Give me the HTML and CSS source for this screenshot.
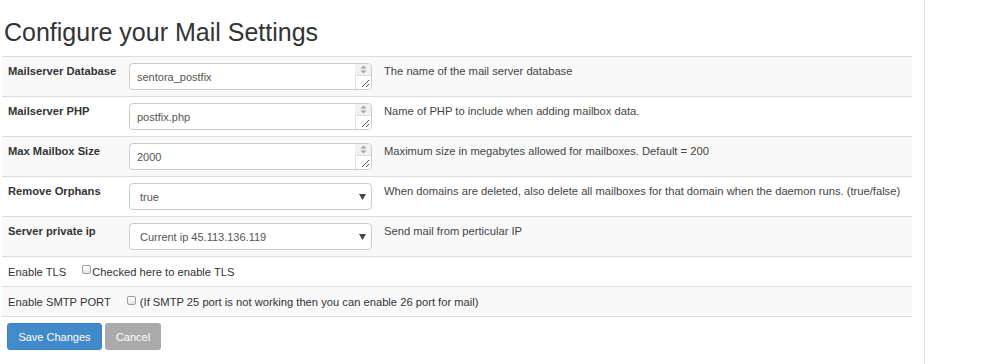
FILE: index.html
```html
<!DOCTYPE html>
<html>
<head>
<meta charset="utf-8">
<link rel="stylesheet" href="styles.css">
</head>
<body>
<div class="page">
  <h1 class="title">Configure your Mail Settings</h1>
  <div class="settings">
    <div class="row odd">
      <div class="label">Mailserver Database</div>
      <div class="field">
        <div class="textbox">
          <span class="value">sentora_postfix</span>
          <span class="scroll"><span class="arrows"><svg width="7" height="9" viewBox="0 0 7 9"><path d="M0.5 3.5 L3.5 0.5 L6.5 3.5 Z M0.5 5.5 L3.5 8.5 L6.5 5.5 Z" fill="#a3a3a3"/></svg></span><span class="grip"><svg width="9" height="9" viewBox="0 0 9 9"><path d="M8 1 L1 8 M8 5 L5 8" stroke="#555" stroke-width="1"/></svg></span></span>
        </div>
      </div>
      <div class="desc">The name of the mail server database</div>
    </div>
    <div class="row">
      <div class="label">Mailserver PHP</div>
      <div class="field">
        <div class="textbox">
          <span class="value">postfix.php</span>
          <span class="scroll"><span class="arrows"><svg width="7" height="9" viewBox="0 0 7 9"><path d="M0.5 3.5 L3.5 0.5 L6.5 3.5 Z M0.5 5.5 L3.5 8.5 L6.5 5.5 Z" fill="#a3a3a3"/></svg></span><span class="grip"><svg width="9" height="9" viewBox="0 0 9 9"><path d="M8 1 L1 8 M8 5 L5 8" stroke="#555" stroke-width="1"/></svg></span></span>
        </div>
      </div>
      <div class="desc">Name of PHP to include when adding mailbox data.</div>
    </div>
    <div class="row odd">
      <div class="label">Max Mailbox Size</div>
      <div class="field">
        <div class="textbox">
          <span class="value">2000</span>
          <span class="scroll"><span class="arrows"><svg width="7" height="9" viewBox="0 0 7 9"><path d="M0.5 3.5 L3.5 0.5 L6.5 3.5 Z M0.5 5.5 L3.5 8.5 L6.5 5.5 Z" fill="#a3a3a3"/></svg></span><span class="grip"><svg width="9" height="9" viewBox="0 0 9 9"><path d="M8 1 L1 8 M8 5 L5 8" stroke="#555" stroke-width="1"/></svg></span></span>
        </div>
      </div>
      <div class="desc">Maximum size in megabytes allowed for mailboxes. Default = 200</div>
    </div>
    <div class="row">
      <div class="label">Remove Orphans</div>
      <div class="field">
        <div class="selectbox">
          <span class="value sel">true</span>
          <svg class="caret" width="7" height="6" viewBox="0 0 7 6"><path d="M0 0 L7 0 L3.5 6 Z" fill="#444"/></svg>
        </div>
      </div>
      <div class="desc">When domains are deleted, also delete all mailboxes for that domain when the daemon runs. (true/false)</div>
    </div>
    <div class="row odd">
      <div class="label">Server private ip</div>
      <div class="field">
        <div class="selectbox">
          <span class="value sel">Current ip 45.113.136.119</span>
          <svg class="caret" width="7" height="6" viewBox="0 0 7 6"><path d="M0 0 L7 0 L3.5 6 Z" fill="#444"/></svg>
        </div>
      </div>
      <div class="desc">Send mail from perticular IP</div>
    </div>
    <div class="checkrow">
      <span class="clabel">Enable TLS</span>
      <span class="box tls"></span><span class="ctext">Checked here to enable TLS</span>
    </div>
    <div class="checkrow odd">
      <span class="clabel">Enable SMTP PORT</span>
      <span class="box smtp"></span><span class="ctext">(If SMTP 25 port is not working then you can enable 26 port for mail)</span>
    </div>
  </div>
  <div class="actions">
    <button class="btn primary">Save Changes</button>
    <button class="btn cancel">Cancel</button>
  </div>
</div>
</body>
</html>
```

FILE: styles.css
```css
html, body {
  margin: 0;
  padding: 0;
  background: #fff;
  font-family: "Liberation Sans", Arial, sans-serif;
  color: #333;
}
.page {
  width: 910px;
  min-height: 364px;
  padding: 0 12px 0 2px;
  border-right: 1px solid #ddd;
  box-sizing: content-box;
}
.title {
  margin: 0;
  padding: 18px 0 0 2px;
  height: 38px;
  font-size: 25px;
  font-weight: normal;
  line-height: 28px;
  color: #333;
}
.settings {
  border-bottom: 1px solid #ddd;
}
.row {
  display: grid;
  grid-template-columns: 121px 255px 1fr;
  border-top: 1px solid #ddd;
  height: 39px;
  font-size: 11.2px;
}
.odd {
  background: #f9f9f9;
}
.label {
  padding: 6px;
  font-weight: bold;
  line-height: 16px;
  color: #333;
}
.field {
  padding: 6px;
}
.desc {
  padding: 6px;
  line-height: 16px;
  color: #444;
}
.textbox, .selectbox {
  box-sizing: border-box;
  width: 243px;
  height: 27px;
  border: 1px solid #ccc;
  border-radius: 4px;
  background: #fff;
  display: flex;
  align-items: center;
  overflow: hidden;
}
.value {
  flex: 1;
  padding-left: 7px;
  font-size: 11px;
  color: #555;
}
.value.sel {
  padding-left: 10px;
}
.scroll {
  width: 16px;
  height: 100%;
  display: flex;
  flex-direction: column;
  align-self: stretch;
}
.arrows {
  height: 11px;
  background: #f1f1f1;
  display: flex;
  align-items: center;
  justify-content: center;
}
.grip {
  flex: 1;
  border: 1px solid #ddd;
  border-right: none;
  border-bottom: none;
  background: #fff;
  display: flex;
  align-items: flex-end;
  justify-content: flex-end;
}
.grip svg {
  display: block;
  margin: 0 1px 1px 0;
}
.caret {
  margin-right: 5px;
}
.checkrow {
  display: flex;
  align-items: center;
  border-top: 1px solid #ddd;
  height: 29px;
  padding-left: 6px;
  font-size: 11.2px;
  color: #333;
}
.box {
  display: inline-block;
  flex: none;
  width: 7px;
  height: 7px;
  border: 1px solid #a0a0a0;
  border-radius: 2px;
  background: linear-gradient(#fff, #e4e4e4);
}
.box.tls {
  margin-left: 16px;
  margin-top: -4px;
  margin-right: 1px;
}
.box.smtp {
  margin-left: 16px;
  margin-top: -3px;
  margin-right: 4px;
}
.ctext {
  color: #333;
}
.actions {
  display: flex;
  gap: 3px;
  padding: 6px 0 0 5px;
}
.btn {
  font-family: "Liberation Sans", Arial, sans-serif;
  font-size: 11px;
  color: #fff;
  border: 1px solid transparent;
  border-radius: 3px;
  height: 27px;
  padding: 0;
  white-space: nowrap;
}
.primary {
  background: #428bca;
  border-color: #3d82be;
  width: 95px;
}
.cancel {
  background: #aaa;
  width: 56px;
}
```
